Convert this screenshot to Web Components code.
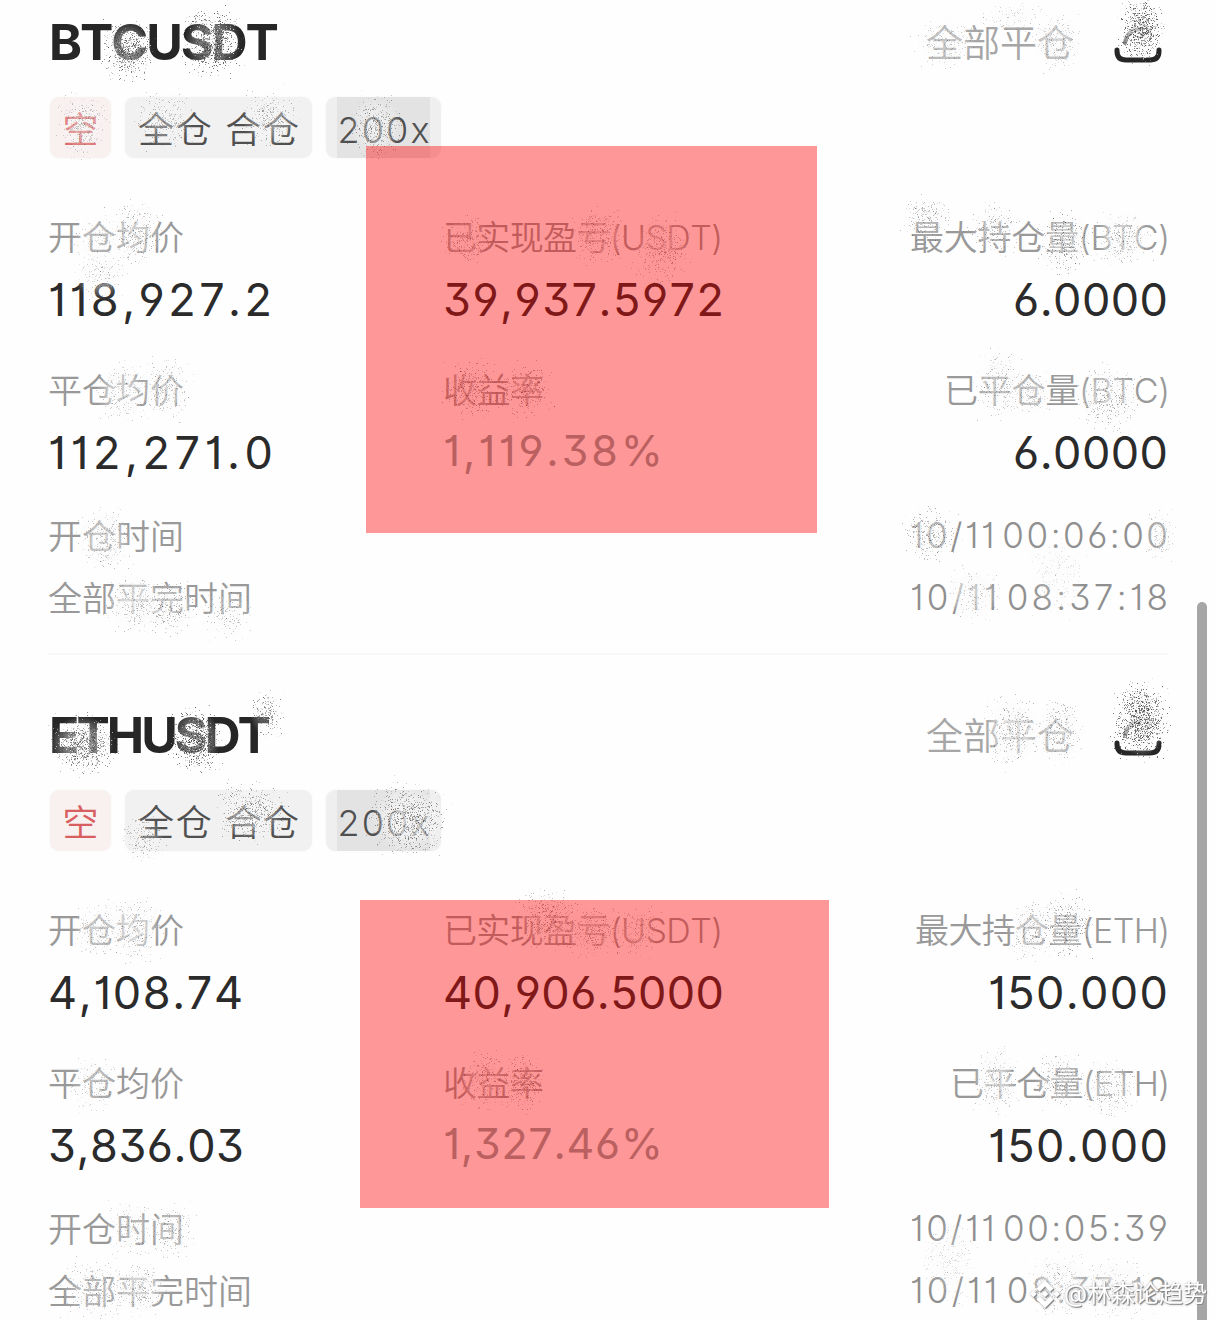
<!DOCTYPE html>
<html lang="zh-CN">
<head>
<meta charset="utf-8">
<title>Positions</title>
<style>
  html, body { margin: 0; background: #fefefe; }
  body {
    height: 1320px;
    overflow: hidden;
    font-family: Inter, "Noto Sans CJK SC", sans-serif;
    font-feature-settings: "cv01", "cv03", "cv04", "cv09", "kern" 0, "calt" 0;
  }
</style>
</head>
<body>
<position-page></position-page>

<script>
// Text that spreads its letters to fill a given width
class FitText extends HTMLElement {
  connectedCallback() {
    this.attachShadow({ mode: "open" }).innerHTML = `
      <style>
        :host{display:block}
        span{display:inline-block;white-space:pre}
      </style>
      <span><slot></slot></span>
    `;
    this.fit();
  }

  fit() {
    const w = parseFloat(this.getAttribute("w"));
    if (!w) return;
    const span = this.shadowRoot.querySelector("span");
    const n = this.textContent.length;
    const gap = (w - span.getBoundingClientRect().width) / (n - 1);
    span.style.letterSpacing = `${gap}px`;
    span.style.marginRight = `${-gap}px`;
  }
}
customElements.define("fit-text", FitText);

class PositionTag extends HTMLElement {
  connectedCallback() {
    this.attachShadow({ mode: "open" }).innerHTML = `
      <style>
        :host{
          display:flex;align-items:center;justify-content:center;box-sizing:border-box;
          height:61px;padding-top:5px;border-radius:9px;background:#f1f1f1;color:#505050;font-size:36px;
          line-height:56px;font-weight:350;box-shadow:0 0 3px #f5f5f5
        }
        :host([kind="short"]){width:61px;background:#f9f0f0;color:#d85f5f}
        :host([kind="mode"]){width:187px}
        :host([kind="lever"]){
          width:115px;
          background:linear-gradient(90deg,#efefef 11px,#e3e3e3 11px,#e3e3e3 104px,#efefef 104px)
        }
      </style>
      <slot></slot>
    `;
  }
}
customElements.define("position-tag", PositionTag);

class ShareIcon extends HTMLElement {
  connectedCallback() {
    this.attachShadow({ mode: "open" }).innerHTML = `
      <style>:host{display:block;width:52px;height:56px}svg{display:block}</style>
      <svg width="52" height="56" viewBox="0 0 52 56" fill="none" stroke-linecap="round">
        <path d="M5 39v1q0 9 9 9h24q9 0 9-9v-1" stroke="#262626" stroke-width="5"/>
        <path d="M13 32c1-8 6-13 15-14" stroke="#777" stroke-width="4"/>
        <path d="M29 12l9 7-9 7" stroke="#ccc" stroke-width="3"/>
      </svg>
    `;
  }
}
customElements.define("share-icon", ShareIcon);

// One label / value pair
class MetricCell extends HTMLElement {
  connectedCallback() {
    this.attachShadow({ mode: "open" }).innerHTML = `
      <style>
        :host{display:flex;flex-direction:column;gap:13px}
        :host([end]){align-items:flex-end}
        .label{height:40px;line-height:42px;font-size:34px;font-weight:350;color:#999}
        .value{height:60px;line-height:60px;font-size:45px;color:#2b2b2b}
        :host([end]) .label{margin-right:-2px}
        :host([muted]) .value{font-size:43px;line-height:55px;color:#8ea0a0}
      </style>
      <div class="label"><slot name="label"></slot></div>
      <div class="value"><slot></slot></div>
    `;
  }
}
customElements.define("metric-cell", MetricCell);

class TimeRow extends HTMLElement {
  connectedCallback() {
    this.attachShadow({ mode: "open" }).innerHTML = `
      <style>
        :host{
          display:flex;justify-content:space-between;height:40px;line-height:42px;
          font-size:34px;font-weight:350;color:#999
        }
        .time{font-size:35px;line-height:38px;font-weight:300;word-spacing:-7px;color:#8f8f8f}
      </style>
      <slot name="label"></slot>
      <div class="time"><slot></slot></div>
    `;
  }
}
customElements.define("time-row", TimeRow);

class PositionCard extends HTMLElement {
  connectedCallback() {
    const d = this.data;
    const cell = (m, attrs = "") => `
      <metric-cell ${attrs}>
        <fit-text slot="label" w="${m[1]}">${m[0]}</fit-text>
        <fit-text w="${m[3]}">${m[2]}</fit-text>
      </metric-cell>`;
    this.attachShadow({ mode: "open" }).innerHTML = `
      <style>
        :host{display:flex;flex-direction:column;height:693px;box-sizing:border-box;padding:0 48px}
        header{display:flex;align-items:center;height:84px}
        h2{margin:0 auto 0 1px;font-size:50px;font-weight:700;color:#262626;line-height:84px}
        .state{font-size:37px;font-weight:350;color:#a6a6a6;margin:-3px 38px 0 0}
        share-icon{margin:-6px 4px 0 0}
        .tags{display:flex;margin:13px 0 59px 2px}
        .tags :nth-child(2){margin:0 14px}
        .metrics{display:grid;grid-template-columns:395px 1fr auto;row-gap:40px}
        .times{display:flex;flex-direction:column;gap:22px;margin-top:33px}
        hr{width:100%;border:0;height:2px;margin:35px 0 0;background:#f8f8f8}
      </style>
      <header>
        <h2><fit-text w="${d.symbolWidth}">${d.symbol}</fit-text></h2>
        <div class="state">全部平仓</div>
        <share-icon></share-icon>
      </header>
      <div class="tags">
        <position-tag kind="short">空</position-tag>
        <position-tag kind="mode"><fit-text w="161">全仓 合仓</fit-text></position-tag>
        <position-tag kind="lever"><fit-text w="92">200x</fit-text></position-tag>
      </div>
      <div class="metrics">
        ${cell(d.open)}
        ${cell(d.pnl)}
        ${cell(d.maxSize, "end")}
        ${cell(d.close)}
        ${cell(d.roi, "muted")}
        ${cell(d.closedSize, "end")}
      </div>
      <div class="times">
        <time-row><span slot="label">开仓时间</span><fit-text w="258">${d.openTime}</fit-text></time-row>
        <time-row><span slot="label">全部平完时间</span><fit-text w="258">${d.closeTime}</fit-text></time-row>
      </div>
      <hr>
    `;
  }
}
customElements.define("position-card", PositionCard);

// Worn spots: pale patches with grey grains scattered over them
class DustLayer extends HTMLElement {
  connectedCallback() {
    this.attachShadow({ mode: "open" }).innerHTML = `
      <style>:host{position:absolute;inset:0;pointer-events:none}canvas{display:block;filter:blur(.35px)}</style>
      <canvas width="1216" height="1320"></canvas>
    `;
    this.draw();
  }

  draw() {
    const ctx = this.shadowRoot.querySelector("canvas").getContext("2d");
    let seed = 7;
    const rand = () => (seed = (seed * 16807) % 2147483647) / 2147483647;
    const spread = () => rand() + rand() + rand() - 1.5;

    // x, y, radius x, radius y, fade, grains, darkness
    const spots = [
      [128, 50, 24, 28, .5, 450, .7], [213, 42, 28, 32, .45, 550, .8],
      [83, 125, 25, 30, .45, 300, .3], [165, 120, 28, 28, .4, 230, .4],
      [270, 118, 28, 28, .45, 230, .4], [375, 126, 26, 30, .5, 300, .5],
      [946, 44, 30, 26, .4, 160, .3], [1056, 42, 24, 26, .6, 200, .3],
      [1012, 18, 30, 16, .1, 80, .3], [1141, 30, 22, 30, .6, 560, .8],
      [98, 238, 26, 22, .4, 110, .25], [135, 234, 26, 30, .6, 220, .4],
      [100, 276, 26, 24, .5, 120, .3], [122, 393, 26, 30, .6, 180, .3],
      [165, 388, 24, 30, .55, 200, .35], [105, 540, 26, 32, .6, 210, .35],
      [135, 603, 30, 28, .75, 230, .35], [170, 608, 26, 26, .55, 180, .45],
      [228, 614, 24, 26, .4, 120, .35],
      [468, 240, 24, 24, .5, 200, .4], [598, 235, 28, 28, .65, 260, .4],
      [662, 248, 28, 34, .65, 300, .4], [470, 388, 26, 28, .45, 240, .5],
      [525, 390, 28, 28, .45, 240, .45],
      [926, 218, 24, 22, .35, 150, .4], [995, 228, 24, 26, .4, 150, .4],
      [1064, 242, 26, 32, .55, 260, .5], [1123, 238, 28, 26, .65, 220, .35],
      [998, 384, 24, 34, .5, 170, .35], [1030, 394, 22, 24, .5, 150, .3],
      [1108, 398, 30, 32, .65, 260, .4], [930, 534, 26, 26, .55, 220, .45],
      [1160, 535, 16, 26, .4, 90, .3], [972, 594, 26, 26, .65, 130, .3],
      [1055, 575, 30, 40, .25, 130, .2],
      [82, 744, 32, 28, .55, 600, .65], [196, 739, 24, 30, .5, 550, .85],
      [266, 714, 16, 22, .3, 140, .6], [142, 838, 22, 22, .35, 140, .4],
      [250, 812, 34, 28, .55, 420, .5], [408, 818, 36, 34, .8, 650, .55],
      [1013, 730, 28, 34, .75, 230, .4], [1058, 730, 22, 32, .6, 230, .35],
      [1141, 720, 26, 36, .75, 720, .8],
      [97, 930, 24, 26, .55, 170, .3], [134, 928, 26, 32, .7, 220, .35],
      [548, 918, 32, 30, .6, 330, .45], [592, 930, 30, 28, .6, 240, .4],
      [638, 930, 20, 26, .5, 150, .35], [94, 1082, 24, 26, .4, 130, .3],
      [483, 1080, 24, 28, .5, 230, .4], [522, 1082, 22, 28, .4, 220, .45],
      [1030, 930, 22, 30, .6, 180, .35], [1067, 924, 24, 32, .5, 240, .5],
      [995, 1080, 22, 32, .65, 180, .35], [1060, 1080, 26, 28, .45, 200, .4],
      [1110, 1088, 26, 28, .5, 190, .35], [130, 1228, 26, 28, .35, 130, .3],
      [172, 1232, 22, 28, .5, 150, .35], [95, 1290, 34, 30, .4, 220, .35],
      [140, 1288, 26, 26, .7, 190, .35], [948, 1260, 26, 44, .3, 160, .25],
      [1060, 1285, 34, 30, .7, 220, .3], [1115, 1288, 34, 30, .7, 180, .25],
    ];

    spots.forEach(([x, y, rx, ry, fade, grains, dark]) => {
      ctx.save();
      ctx.translate(x, y);
      ctx.scale(rx, ry);
      const g = ctx.createRadialGradient(0, 0, 0, 0, 0, 1);
      g.addColorStop(0, `rgba(250,250,250,${fade})`);
      g.addColorStop(.5, `rgba(250,250,250,${fade * .8})`);
      g.addColorStop(1, "rgba(250,250,250,0)");
      ctx.fillStyle = g;
      ctx.fillRect(-1, -1, 2, 2);
      ctx.restore();
      for (let i = 0; i < grains * 2; i++) {
        const shade = rand() < .25 ? 255 : 60;
        ctx.fillStyle = `rgba(${shade},${shade},${shade},${dark * rand()})`;
        ctx.fillRect(Math.round(x + spread() * rx * .85), Math.round(y + spread() * ry * .85), 1, 1);
      }
    });
  }
}
customElements.define("dust-layer", DustLayer);

class AuthorMark extends HTMLElement {
  connectedCallback() {
    this.attachShadow({ mode: "open" }).innerHTML = `
      <style>
        :host{
          position:absolute;left:1030px;top:1277px;display:flex;align-items:center;gap:4px;height:34px;
          color:#fff;font-size:24px;line-height:36px;
          filter:drop-shadow(1px 1px .5px #888) drop-shadow(0 0 1px #bbb)
        }
        svg{display:block}
      </style>
      <svg width="30" height="30" viewBox="0 0 30 30" fill="#fff">
        <path d="M15 1l8.5 8.5-3.3 3.3L15 7.6l-5.2 5.2-3.3-3.3zM15 11.7l3.3 3.3-3.3 3.3-3.3-3.3zM3.3 11.7L6.6 15l-3.3 3.3L0 15zM26.7 11.7L30 15l-3.3 3.3-3.3-3.3zM9.8 17.2l5.2 5.2 5.2-5.2 3.3 3.3L15 29l-8.5-8.5z"/>
      </svg>
      <fit-text w="143">@林森论趋势</fit-text>
    `;
  }
}
customElements.define("author-mark", AuthorMark);

class PositionPage extends HTMLElement {
  connectedCallback() {
    this.attachShadow({ mode: "open" }).innerHTML = `
      <style>
        :host{display:block;position:relative;width:1216px;height:1320px;overflow:hidden}
        .mark{position:absolute;background:rgba(255,0,0,.4)}
        .first{left:366px;top:146px;width:451px;height:387px}
        .second{left:360px;top:900px;width:469px;height:308px}
        .scroll{position:absolute;left:1197px;top:602px;width:10px;height:740px;border-radius:5px;background:#a6a6a6}
      </style>
      <main></main>
      <dust-layer></dust-layer>
      <div class="mark first"></div>
      <div class="mark second"></div>
      <div class="scroll"></div>
      <author-mark></author-mark>
    `;
    const main = this.shadowRoot.querySelector("main");
    POSITIONS.forEach((data) => {
      const card = document.createElement("position-card");
      card.data = data;
      main.append(card);
    });
  }
}

// Metrics: label, label width, value, value width
const POSITIONS = [
  {
    symbol: "BTCUSDT",
    symbolWidth: 230,
    open: ["开仓均价", 136, "118,927.2", 224],
    pnl: ["已实现盈亏(USDT)", 280, "39,937.5972", 281],
    maxSize: ["最大持仓量(BTC)", 260, "6.0000", 155],
    close: ["平仓均价", 136, "112,271.0", 225],
    roi: ["收益率", 101, "1,119.38%", 220],
    closedSize: ["已平仓量(BTC)", 226, "6.0000", 155],
    openTime: "10/11 00:06:00",
    closeTime: "10/11 08:37:18",
  },
  {
    symbol: "ETHUSDT",
    symbolWidth: 222,
    open: ["开仓均价", 136, "4,108.74", 195],
    pnl: ["已实现盈亏(USDT)", 280, "40,906.5000", 281],
    maxSize: ["最大持仓量(ETH)", 255, "150.000", 180],
    close: ["平仓均价", 136, "3,836.03", 196],
    roi: ["收益率", 101, "1,327.46%", 220],
    closedSize: ["已平仓量(ETH)", 220, "150.000", 180],
    openTime: "10/11 00:05:39",
    closeTime: "10/11 08:37:18",
  },
];
customElements.define("position-page", PositionPage);
</script>
</body>
</html>
